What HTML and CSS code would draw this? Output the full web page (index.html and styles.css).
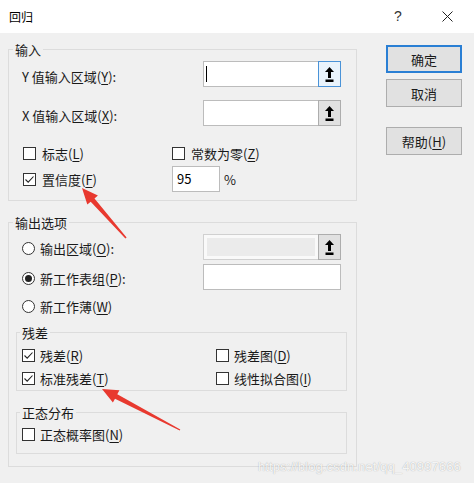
FILE: index.html
```html
<!DOCTYPE html>
<html lang="zh-CN">
<head>
<meta charset="utf-8">
<title>回归</title>
<link rel="stylesheet" href="styles.css">
</head>
<body>
<div class="titlebar">
  <span class="title">回归</span>
  <span class="tb-help">?</span>
  <span class="tb-close"><svg width="11" height="11" viewBox="0 0 11 11"><path d="M0.5 0.5 L10.5 10.5 M10.5 0.5 L0.5 10.5" stroke="#222" stroke-width="1" fill="none"/></svg></span>
</div>
<div class="body">
  <div class="main">
    <fieldset class="group">
      <legend>输入</legend>
      <div class="in-inner">
        <div class="range-row">
          <span class="range-label">Y 值输入区域(<u>Y</u>):</span>
          <span class="refedit">
            <span class="field"><span class="caret"></span></span>
            <span class="pick focus"><svg width="9" height="15" viewBox="0 0 9 15"><polygon points="4.5,0 0,5 9,5" fill="#000"/><rect x="3" y="4.5" width="3" height="6.5" fill="#000"/><rect x="0.5" y="12.5" width="8" height="2.5" fill="#000"/></svg></span>
          </span>
        </div>
        <div class="range-row">
          <span class="range-label">X 值输入区域(<u>X</u>):</span>
          <span class="refedit">
            <span class="field"></span>
            <span class="pick"><svg width="9" height="15" viewBox="0 0 9 15"><polygon points="4.5,0 0,5 9,5" fill="#000"/><rect x="3" y="4.5" width="3" height="6.5" fill="#000"/><rect x="0.5" y="12.5" width="8" height="2.5" fill="#000"/></svg></span>
          </span>
        </div>
        <div class="check-grid">
          <span class="opt"><span class="box"></span><span>标志(<u>L</u>)</span></span>
          <span class="opt"><span class="box"></span><span>常数为零(<u>Z</u>)</span></span>
          <span class="opt"><span class="box"><svg width="11" height="11" viewBox="0 0 11 11"><path d="M1.5 5.5 L4.2 8.2 L9.5 2.5" stroke="#222" stroke-width="1.1" fill="none"/></svg></span><span>置信度(<u>F</u>)</span></span>
          <span class="conf"><span class="conf-field">95</span><span class="pct">%</span></span>
        </div>
      </div>
    </fieldset>

    <fieldset class="group output">
      <legend>输出选项</legend>
      <div class="out-inner">
        <div class="radio-row r1">
          <span class="radio-opt"><span class="radio"></span><span>输出区域(<u>O</u>):</span></span>
          <span class="refedit">
            <span class="field disabled"></span>
            <span class="pick"><svg width="9" height="15" viewBox="0 0 9 15"><polygon points="4.5,0 0,5 9,5" fill="#000"/><rect x="3" y="4.5" width="3" height="6.5" fill="#000"/><rect x="0.5" y="12.5" width="8" height="2.5" fill="#000"/></svg></span>
          </span>
        </div>
        <div class="radio-row r2">
          <span class="radio-opt"><span class="radio on"></span><span>新工作表组(<u>P</u>):</span></span>
          <span class="field wide"></span>
        </div>
        <div class="radio-row r3">
          <span class="radio-opt"><span class="radio"></span><span>新工作薄(<u>W</u>)</span></span>
        </div>

        <fieldset class="group sub">
          <legend>残差</legend>
          <div class="sub-inner">
            <span class="opt s"><span class="box"><svg width="11" height="11" viewBox="0 0 11 11"><path d="M1.5 5.5 L4.2 8.2 L9.5 2.5" stroke="#222" stroke-width="1.1" fill="none"/></svg></span><span>残差(<u>R</u>)</span></span>
            <span class="opt s"><span class="box"></span><span>残差图(<u>D</u>)</span></span>
            <span class="opt s"><span class="box"><svg width="11" height="11" viewBox="0 0 11 11"><path d="M1.5 5.5 L4.2 8.2 L9.5 2.5" stroke="#222" stroke-width="1.1" fill="none"/></svg></span><span>标准残差(<u>T</u>)</span></span>
            <span class="opt s"><span class="box"></span><span>线性拟合图(<u>I</u>)</span></span>
          </div>
        </fieldset>

        <fieldset class="group sub sub2">
          <legend>正态分布</legend>
          <div class="sub-inner two">
            <span class="opt s"><span class="box"></span><span>正态概率图(<u>N</u>)</span></span>
          </div>
        </fieldset>
      </div>
    </fieldset>
  </div>

  <div class="buttons">
    <span class="btn default">确定</span>
    <span class="btn">取消</span>
    <span class="btn help"><span>帮助(<u>H</u>)</span></span>
  </div>
</div>

<svg class="arrows" width="474" height="483" viewBox="0 0 474 483">
  <polygon fill="#e8392f" points="82,188 97.9,195.4 94.5,198.4 126.6,237.6 125.4,238.4 90.7,201.7 87.3,204.6"/>
  <polygon fill="#e8392f" points="102,389 119.4,390.2 117.3,394.2 180.3,429.5 179.7,430.5 115,398.7 112.9,402.6"/>
</svg>
<div class="watermark">https://blog.csdn.net/qq_40997666</div>
</body>
</html>
```
FILE: styles.css
```css
* { box-sizing: border-box; }
html, body { margin: 0; padding: 0; }
body {
  width: 474px;
  height: 483px;
  overflow: hidden;
  position: relative;
  background: #f0f0f0;
  font-family: "Noto Sans CJK SC", "Microsoft YaHei", sans-serif;
  font-size: 13px;
  line-height: 17px;
  color: #1a1a1a;
}
u { text-underline-offset: 2px; text-decoration-thickness: 1px; }

.titlebar {
  height: 33px;
  background: #fff;
  display: flex;
  align-items: center;
  padding-left: 9px;
  padding-right: 12px;
}
.title { flex: 1; font-size: 12px; color: #000; }
.tb-help {
  width: 20px;
  text-align: center;
  font-family: "Liberation Sans", sans-serif;
  font-size: 14px;
  color: #333;
  margin-right: 24px;
}
.tb-close {
  width: 30px;
  display: flex;
  justify-content: center;
}

.body {
  display: flex;
  padding: 8px 0 0 8px;
  height: 450px;
}
.main { width: 349px; }

fieldset.group {
  margin: 0;
  padding: 0;
  border: 1px solid #dcdcdc;
  min-width: 0;
}
fieldset.group > legend {
  margin-left: 4px;
  padding: 0 2px;
  height: 17px;
  line-height: 17px;
  color: #1a1a1a;
}

.in-inner { padding: 3px 14px 8px 13px; }
.range-row {
  display: flex;
  align-items: center;
  height: 26px;
}
.range-row + .range-row { margin-top: 13px; }
.range-label { width: 181px; padding-top: 4px; }

.refedit { display: flex; height: 26px; }
.field {
  width: 115px;
  height: 26px;
  border: 1px solid #bcbcbc;
  border-right: none;
  background: #fff;
  display: flex;
  align-items: center;
  padding-left: 2px;
}
.field.disabled {
  background: #ebebeb;
  box-shadow: inset 0 0 0 3px #f9f9f9;
  border-color: #d0d0d0;
}
.field.wide { width: 138px; border-right: 1px solid #bcbcbc; }
.caret { width: 1px; height: 16px; background: #000; }
.pick {
  width: 23px;
  height: 26px;
  border: 1px solid #adadad;
  background: #e1e1e1;
  display: flex;
  align-items: center;
  justify-content: center;
}
.pick.focus { border-color: #4a93d8; background: #e9f3fc; }

.check-grid {
  display: grid;
  grid-template-columns: 149px 1fr;
  grid-template-rows: 20px 26px;
  row-gap: 3px;
  margin-top: 17px;
  padding-left: 1px;
}
.opt { display: flex; align-items: center; }
.opt .box { margin-right: 6px; }
.opt.s .box { margin-right: 5px; }
.box {
  width: 13px;
  height: 13px;
  border: 1px solid #333;
  background: #fff;
  display: flex;
  align-items: center;
  justify-content: center;
  flex: none;
}
.conf { display: flex; align-items: center; }
.conf-field {
  width: 48px;
  height: 26px;
  border: 1px solid #bcbcbc;
  background: #fff;
  padding-left: 4px;
  line-height: 24px;
  color: #000;
}
.pct { margin-left: 4px; }

fieldset.output { margin-top: 13px; }
.out-inner { padding: 0 9px 12px 7px; }
.radio-row {
  display: flex;
  align-items: center;
  height: 26px;
  margin-left: 6px;
}
.r1 { margin-top: 3px; }
.r2 { margin-top: 4px; }
.r3 { margin-top: 5px; height: 20px; }
.radio-opt { width: 181px; display: flex; align-items: center; padding-top: 2px; }
.radio {
  width: 13px;
  height: 13px;
  border-radius: 50%;
  border: 1px solid #333;
  background: #fff;
  margin-right: 5px;
  display: flex;
  align-items: center;
  justify-content: center;
  flex: none;
}
.radio.on::after {
  content: "";
  width: 7px;
  height: 7px;
  border-radius: 50%;
  background: #222;
}

fieldset.sub { margin-top: 9px; }
fieldset.sub > legend { margin-left: 3px; }
.sub-inner {
  display: grid;
  grid-template-columns: 194px 1fr;
  grid-auto-rows: 20px;
  row-gap: 3px;
  padding: 4px 0 2px 5px;
}
fieldset.sub2 { margin-top: 13px; }
.sub-inner.two { padding: 3px 0 9px 5px; }

.buttons {
  margin-left: 29px;
  width: 76px;
  display: flex;
  flex-direction: column;
  padding-top: 4px;
}
.btn {
  height: 28px;
  border: 1px solid #adadad;
  background: #e1e1e1;
  display: flex;
  align-items: center;
  justify-content: center;
  color: #1a1a1a;
}
.btn.default { border: 2px solid #2a7fd4; }
.btn + .btn { margin-top: 6px; }
.btn.help { margin-top: 20px; }

.arrows { position: absolute; left: 0; top: 0; pointer-events: none; }
.watermark {
  position: absolute;
  left: 258px;
  top: 459px;
  font-family: "Liberation Sans", sans-serif;
  font-size: 13px;
  line-height: 16px;
  color: rgba(255, 255, 255, 0.9);
  text-shadow: 0 0 1px rgba(0, 0, 0, 0.35);
  letter-spacing: 0.1px;
}
```
